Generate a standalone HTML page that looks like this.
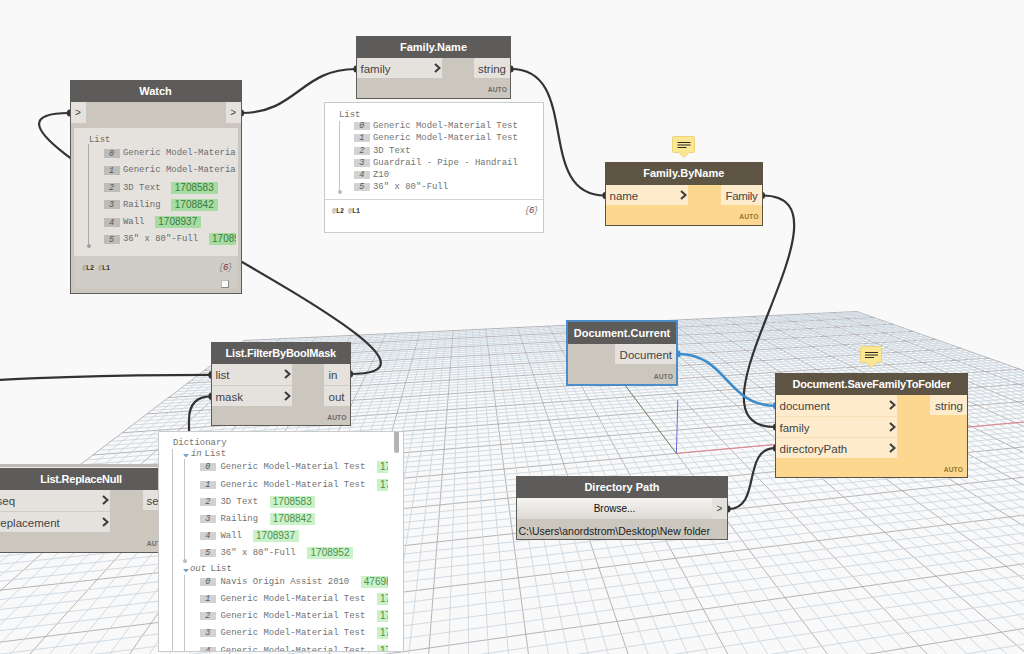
<!DOCTYPE html>
<html><head><meta charset="utf-8"><title>Dynamo</title>
<style>
*{box-sizing:border-box;margin:0;padding:0}
html,body{width:1024px;height:654px;overflow:hidden;background:#f9f9f9;font-family:"Liberation Sans",sans-serif}
.L{position:absolute;left:0;top:0}
.node{position:absolute;background:#cbc6be;border:1px solid #5e5c5a;border-top:none}
.hd{position:absolute;left:-1px;right:-1px;top:0;height:22px;background:#5e5c5a;color:#fff;font-weight:bold;font-size:11px;line-height:22px;text-align:center;white-space:nowrap}
.pt{position:absolute;background:#e5e2de;color:#444;font-size:11.5px;line-height:22px;height:20px;white-space:nowrap;overflow:hidden}
.pi{padding-left:3.5px}
.po{text-align:right;padding-right:4px}
.ch{position:absolute;right:1px;top:5px;width:7px;height:10px}
.auto{position:absolute;font-size:6.7px;font-weight:bold;color:#6e6a66;letter-spacing:.1px;margin-top:1px}
.warn{background:#fbd78f;border-color:#5d5444}
.warn .hd{background:#5d5444}
.warn .pt{background:#fdebcb}
.warn .auto{color:#96762f}
.mono{font-family:"Liberation Mono",monospace;font-size:8.95px;color:#6b6b6b;white-space:pre;position:absolute;line-height:12px;height:12px}
.ix{position:absolute;width:16px;height:9px;background:#bebcb9;color:#555;font-family:"Liberation Mono",monospace;font-style:italic;font-size:8.5px;line-height:10.5px;text-align:center}
.tag{position:absolute;height:12px;background:#a6dca2;color:#3d7a3d;font-size:10px;line-height:12px;text-align:center;white-space:nowrap;overflow:hidden}
.bub{position:absolute;background:#fff;border:1px solid #cbcbcb;overflow:hidden}
.bub .mono{color:#727272}
.bub .ix{width:16.5px;background:#d2d2d2;height:8px;line-height:9.5px}
.bub .tag{background:#caf2c8;color:#4f8f4f}
.vl{position:absolute;width:1px;background:#a9a9a9}
.dot{position:absolute;width:4px;height:4px;border-radius:2px;background:#a0a0a0}
.lv{position:absolute;font-family:"Liberation Mono",monospace;font-weight:bold;font-size:6.7px;color:#333;white-space:pre;line-height:8px}
.lv i{font-style:normal;color:#999;font-weight:normal}
.cnt{position:absolute;letter-spacing:-1px;font-family:"Liberation Mono",monospace;font-style:italic;font-size:9px;color:#7a2a2a;line-height:10px;white-space:pre}
.cnt b{font-weight:normal;color:#888}
.note{position:absolute}
</style></head><body>
<svg class="L" width="1024" height="654" viewBox="0 0 1024 654">
<path d="M243.8 340.5L-30.0 548.2M243.8 340.5L856.9 311.5M280.4 338.8L-30.0 618.1M231.9 349.5L874.0 317.5M316.4 337.1L2.7 684.0M218.8 359.5L892.7 324.2M351.6 335.4L108.7 684.0M204.1 370.6L913.2 331.4M386.1 333.8L214.6 684.0M187.5 383.2L935.8 339.4M419.9 332.2L320.5 684.0M168.6 397.5L960.8 348.3M453.1 330.6L426.4 684.0M147.0 413.9L988.6 358.1M485.6 329.1L532.4 684.0M122.1 432.8L1019.6 369.1M517.4 327.6L638.3 684.0M92.8 455.0L1054.0 381.5M548.7 326.1L744.2 684.0M58.1 481.3L1054.0 398.9M579.4 324.6L850.1 684.0M16.3 513.1L1054.0 419.3M609.5 323.2L956.0 684.0M-30.0 551.6L1054.0 443.9M639.0 321.8L1054.0 677.2M-30.0 593.5L1054.0 473.9M668.0 320.4L1054.0 601.2M-30.0 645.8L1054.0 511.4M696.5 319.1L1054.0 545.1M174.9 684.0L1054.0 559.5M724.4 317.8L1054.0 502.0M687.7 684.0L1054.0 623.5M751.8 316.5L1054.0 467.8M778.8 315.2L1054.0 440.1M805.3 313.9L1054.0 417.1M831.3 312.7L1054.0 397.8M856.9 311.5L1054.0 381.3" stroke="#a6a8ac" stroke-width="0.85" fill="none"/>
<path d="M251.2 340.2L-30.0 560.3M241.5 342.2L860.2 312.6M258.5 339.8L-30.0 573.3M239.2 344.0L863.6 313.8M265.9 339.5L-30.0 587.2M236.8 345.8L867.0 315.1M273.2 339.1L-30.0 602.1M234.4 347.6L870.5 316.3M287.7 338.4L-30.0 635.4M229.4 351.4L877.6 318.8M294.9 338.1L-30.0 654.0M226.9 353.3L881.3 320.1M302.1 337.8L-30.0 674.2M224.2 355.3L885.0 321.4M309.3 337.4L-18.4 684.0M221.5 357.4L888.9 322.8M323.5 336.7L23.9 684.0M216.0 361.6L896.7 325.6M330.6 336.4L45.1 684.0M213.1 363.8L900.7 327.0M337.6 336.1L66.3 684.0M210.2 366.0L904.8 328.4M344.6 335.7L87.5 684.0M207.2 368.3L909.0 329.9M358.6 335.1L129.9 684.0M200.9 373.0L917.6 333.0M365.5 334.8L151.0 684.0M197.7 375.5L922.0 334.5M372.4 334.4L172.2 684.0M194.4 378.0L926.5 336.1M379.3 334.1L193.4 684.0M191.0 380.6L931.1 337.8M392.9 333.5L235.8 684.0M183.9 385.9L940.6 341.1M399.7 333.1L257.0 684.0M180.2 388.7L945.5 342.9M406.5 332.8L278.1 684.0M176.5 391.6L950.5 344.6M413.2 332.5L299.3 684.0M172.6 394.5L955.6 346.4M426.6 331.9L341.7 684.0M164.6 400.6L966.1 350.1M433.3 331.5L362.9 684.0M160.4 403.8L971.5 352.1M439.9 331.2L384.1 684.0M156.0 407.0L977.1 354.0M446.5 330.9L405.3 684.0M151.6 410.4L982.8 356.0M459.6 330.3L447.6 684.0M142.3 417.4L994.5 360.2M466.1 330.0L468.8 684.0M137.5 421.1L1000.6 362.3M472.6 329.7L490.0 684.0M132.5 424.9L1006.8 364.5M479.1 329.4L511.2 684.0M127.4 428.8L1013.1 366.8M492.0 328.8L553.5 684.0M116.6 437.0L1026.3 371.4M498.4 328.5L574.7 684.0M110.9 441.3L1033.1 373.9M504.8 328.2L595.9 684.0M105.1 445.7L1040.1 376.3M511.1 327.9L617.1 684.0M99.1 450.3L1047.3 378.9M523.7 327.3L659.5 684.0M86.4 459.9L1054.0 384.8M530.0 327.0L680.6 684.0M79.7 465.0L1054.0 388.1M536.3 326.7L701.8 684.0M72.7 470.2L1054.0 391.6M542.5 326.4L723.0 684.0M65.6 475.7L1054.0 395.2M554.9 325.8L765.4 684.0M50.4 487.2L1054.0 402.7M561.0 325.5L786.6 684.0M42.3 493.3L1054.0 406.6M567.2 325.2L807.8 684.0M34.0 499.6L1054.0 410.7M573.3 324.9L828.9 684.0M25.3 506.2L1054.0 415.0M585.4 324.3L871.3 684.0M6.8 520.2L1054.0 423.9M591.5 324.0L892.5 684.0M-3.0 527.7L1054.0 428.6M597.5 323.8L913.7 684.0M-13.2 535.4L1054.0 433.5M603.5 323.5L934.9 684.0M-24.0 543.6L1054.0 438.6M615.4 322.9L977.2 684.0M-30.0 559.3L1054.0 449.4M621.3 322.6L998.4 684.0M-30.0 567.3L1054.0 455.2M627.3 322.4L1019.6 684.0M-30.0 575.6L1054.0 461.1M633.1 322.1L1040.8 684.0M-30.0 584.4L1054.0 467.4M644.8 321.5L1054.0 659.9M-30.0 603.0L1054.0 480.7M650.7 321.2L1054.0 643.8M-30.0 613.0L1054.0 487.9M656.5 321.0L1054.0 628.7M-30.0 623.4L1054.0 495.3M662.2 320.7L1054.0 614.5M-30.0 634.3L1054.0 503.2M673.7 320.2L1054.0 588.6M-30.0 657.9L1054.0 520.0M679.4 319.9L1054.0 576.8M-30.0 670.6L1054.0 529.1M685.1 319.6L1054.0 565.7M-30.0 684.0L1054.0 538.7M690.8 319.3L1054.0 555.1M72.3 684.0L1054.0 548.8M702.1 318.8L1054.0 535.6M277.5 684.0L1054.0 570.8M707.7 318.5L1054.0 526.5M380.0 684.0L1054.0 582.8M713.3 318.3L1054.0 518.0M482.6 684.0L1054.0 595.5M718.9 318.0L1054.0 509.8M585.2 684.0L1054.0 609.1M729.9 317.5L1054.0 494.5M790.3 684.0L1054.0 639.0M735.4 317.2L1054.0 487.4M892.8 684.0L1054.0 655.5M740.9 317.0L1054.0 480.6M995.4 684.0L1054.0 673.3M746.4 316.7L1054.0 474.1M757.3 316.2L1054.0 461.8M762.7 315.9L1054.0 456.0M768.1 315.7L1054.0 450.5M773.5 315.4L1054.0 445.2M784.1 314.9L1054.0 435.1M789.5 314.7L1054.0 430.4M794.7 314.4L1054.0 425.8M800.0 314.2L1054.0 421.4M810.5 313.7L1054.0 413.0M815.7 313.4L1054.0 409.0M821.0 313.2L1054.0 405.1M826.1 312.9L1054.0 401.4M836.5 312.4L1054.0 394.2M841.6 312.2L1054.0 390.9M846.7 312.0L1054.0 387.6M851.8 311.7L1054.0 384.4" stroke="#ccd7e0" stroke-width="0.9" fill="none"/>
<path d="M676.4 453.4L1054.0 419.3" stroke="#e3838d" stroke-width="1" fill="none"/>
<path d="M676.4 453.4L579.4 324.6" stroke="#5d8a5d" stroke-width="0.9" fill="none"/>
<path d="M676.4 453.4L677.8 399.8" stroke="#7468d0" stroke-width="1" fill="none"/>
</svg>
<svg class="L" width="1024" height="654" viewBox="0 0 1024 654"><path d="M350.5 374.0C523.1 374.0 -103.1 113.0 69.5 113.0" stroke="#333" stroke-width="2.2" fill="none"/><path d="M241.5 113.0C296.7 113.0 300.8 69.0 356.0 69.0" stroke="#333" stroke-width="2.2" fill="none"/><path d="M511.0 69.0C581.9 69.0 534.1 195.5 605.0 195.5" stroke="#333" stroke-width="2.2" fill="none"/><path d="M762.5 195.5C866.8 195.5 671.2 427.0 775.5 427.0" stroke="#333" stroke-width="2.2" fill="none"/><path d="M678.0 354.0C727.7 354.0 725.8 405.8 775.5 405.8" stroke="#3c8ccb" stroke-width="2.6" fill="none"/><path d="M728.0 509.0C762.7 509.0 740.8 448.2 775.5 448.2" stroke="#333" stroke-width="2.2" fill="none"/><path d="M-300.0 389.0C-70.0 389.0 -19.0 374.9 211.0 374.9" stroke="#333" stroke-width="2.2" fill="none"/><path d="M211 396.3C198 396.3 189 402 189 420L189 440" stroke="#333" stroke-width="2.2" fill="none"/><ellipse cx="69.5" cy="113" rx="2.6" ry="3.6" fill="#333"/><ellipse cx="241.5" cy="113" rx="2.6" ry="3.6" fill="#333"/><ellipse cx="356" cy="69" rx="2.6" ry="3.6" fill="#333"/><ellipse cx="511" cy="69" rx="2.6" ry="3.6" fill="#333"/><ellipse cx="605" cy="195.5" rx="2.6" ry="3.6" fill="#333"/><ellipse cx="762.5" cy="195.5" rx="2.6" ry="3.6" fill="#333"/><ellipse cx="775.5" cy="427" rx="2.6" ry="3.6" fill="#333"/><ellipse cx="775.5" cy="405.8" rx="2.6" ry="3.6" fill="#3c8ccb"/><ellipse cx="678" cy="354" rx="2.6" ry="3.6" fill="#3c8ccb"/><ellipse cx="728" cy="509" rx="2.6" ry="3.6" fill="#333"/><ellipse cx="775.5" cy="448.2" rx="2.6" ry="3.6" fill="#333"/><ellipse cx="211" cy="374.9" rx="2.6" ry="3.6" fill="#333"/><ellipse cx="211" cy="396.3" rx="2.6" ry="3.6" fill="#333"/><ellipse cx="350.5" cy="374" rx="2.6" ry="3.6" fill="#333"/></svg>

<!-- Watch -->
<div class="node" style="left:69.5px;top:80px;width:172px;height:214px">
 <div class="hd">Watch</div>
 <div class="pt" style="left:0;top:22px;width:15px;height:20.6px;text-align:center;font-size:10px">&gt;</div>
 <div class="pt" style="right:0;top:22px;width:14.5px;height:20.6px;text-align:center;font-size:10px">&gt;</div>
 <div style="position:absolute;left:3.5px;top:48px;width:164px;height:128px;background:#e5e2de"><div style="position:absolute;left:0;top:0;width:162px;height:128px;overflow:hidden">
  <div class="mono" style="left:15px;top:6px">List</div>
  <div class="vl" style="left:14px;top:16px;height:102px"></div><div class="dot" style="left:12.5px;top:116px"></div>
  <div class="ix" style="left:29.5px;top:20.5px">0</div>
  <div class="mono" style="left:49px;top:19.0px">Generic Model-Material Test</div>
  <div class="tag" style="left:195px;top:19.0px;width:46px">1708583</div>
  <div class="ix" style="left:29.5px;top:37.7px">1</div>
  <div class="mono" style="left:49px;top:36.2px">Generic Model-Material Test</div>
  <div class="tag" style="left:195px;top:36.2px;width:46px">1708583</div>
  <div class="ix" style="left:29.5px;top:55.0px">2</div>
  <div class="mono" style="left:49px;top:53.5px">3D Text</div>
  <div class="tag" style="left:97px;top:53.5px;width:46.5px">1708583</div>
  <div class="ix" style="left:29.5px;top:72.2px">3</div>
  <div class="mono" style="left:49px;top:70.7px">Railing</div>
  <div class="tag" style="left:97px;top:70.7px;width:46.5px">1708842</div>
  <div class="ix" style="left:29.5px;top:89.5px">4</div>
  <div class="mono" style="left:49px;top:88.0px">Wall</div>
  <div class="tag" style="left:81px;top:88.0px;width:45.5px">1708937</div>
  <div class="ix" style="left:29.5px;top:106.7px">5</div>
  <div class="mono" style="left:49px;top:105.2px">36" x 80"-Full</div>
  <div class="tag" style="left:134.5px;top:105.2px;width:46px">1708952</div>
 </div></div>
 <div style="position:absolute;left:3.5px;top:176px;width:164px;height:33px;background:#d0cdc7">
  <div class="lv" style="left:8px;top:8px"><i>@</i>L2 <i>@</i>L1</div>
  <div class="cnt" style="left:144.5px;top:7px"><b>{</b>6<b>}</b></div>
  <div style="position:absolute;left:147px;top:24px;width:8px;height:8px;background:#fafafa;border:1px solid #bbb;border-right-color:#888;border-bottom-color:#888"></div>
 </div>
</div>

<!-- Family.Name -->
<div class="node" style="left:356px;top:36px;width:155px;height:63px">
 <div class="hd">Family.Name</div>
 <div class="pt pi" style="left:0;top:22px;width:85px">family<svg class="ch" viewBox="0 0 7 10"><path d="M1 1L5.5 5L1 9" stroke="#3a3a3a" stroke-width="2" fill="none"/></svg></div>
 <div class="pt po" style="right:0;top:22px;width:36px">string</div>
 <div class="auto" style="right:3px;top:49px">AUTO</div>
</div>
<div class="bub" style="left:324px;top:102px;width:220px;height:131px">
 <div class="mono" style="left:14px;top:6px">List</div>
 <div class="vl" style="left:14px;top:18px;height:71px;background:#c4c4c4"></div><div class="dot" style="left:12.5px;top:87px;background:#bbb"></div>
 <div class="ix" style="left:28.5px;top:19.0px">0</div>
  <div class="mono" style="left:48px;top:17.0px">Generic Model-Material Test</div>
  <div class="ix" style="left:28.5px;top:31.3px">1</div>
  <div class="mono" style="left:48px;top:29.3px">Generic Model-Material Test</div>
  <div class="ix" style="left:28.5px;top:43.6px">2</div>
  <div class="mono" style="left:48px;top:41.6px">3D Text</div>
  <div class="ix" style="left:28.5px;top:55.8px">3</div>
  <div class="mono" style="left:48px;top:53.8px">Guardrail - Pipe - Handrail</div>
  <div class="ix" style="left:28.5px;top:68.1px">4</div>
  <div class="mono" style="left:48px;top:66.1px">Z10</div>
  <div class="ix" style="left:28.5px;top:80.4px">5</div>
  <div class="mono" style="left:48px;top:78.4px">36" x 80"-Full</div>
 <div style="position:absolute;left:0;right:0;top:96px;height:1px;background:#d4d4d4"></div>
 <div class="lv" style="left:7px;top:104px"><i>@</i>L2 <i>@</i>L1</div>
 <div class="cnt" style="left:199.5px;top:103px"><b>{</b>6<b>}</b></div>
</div>

<!-- Family.ByName -->
<svg class="note" style="left:672px;top:136px" width="24" height="23" viewBox="0 0 24 23"><path d="M1.5 .5H21.5Q22.5 .5 22.5 1.5V15.5Q22.5 16.5 21.5 16.5H17L12 21.5L7 16.5H1.5Q.5 16.5 .5 15.5V1.5Q.5 .5 1.5 .5Z" fill="#fbe691" stroke="#ead47c"/><path d="M5.5 6.5H18.5M5.5 9H18.5M5.5 11.5H14.5" stroke="#2a2a2a" stroke-width="1.2"/></svg>
<div class="node warn" style="left:605px;top:162px;width:157.5px;height:63.5px">
 <div class="hd" style="height:22.5px">Family.ByName</div>
 <div class="pt pi" style="left:0;top:22.5px;width:82px;height:20.5px">name<svg class="ch" viewBox="0 0 7 10"><path d="M1 1L5.5 5L1 9" stroke="#3a3a3a" stroke-width="2" fill="none"/></svg></div>
 <div class="pt po" style="right:0;top:22.5px;width:40.5px;height:20.5px;letter-spacing:-.3px">Family</div>
 <div class="auto" style="right:3px;top:50px">AUTO</div>
</div>

<!-- Document.Current -->
<div class="node" style="left:566px;top:320px;width:112px;height:66px;border:2px solid #4b8dc9">
 <div class="hd" style="left:0;right:0;top:0">Document.Current</div>
 <div class="pt po" style="right:0;top:22px;width:61px">Document</div>
 <div class="auto" style="right:3px;top:50px">AUTO</div>
</div>

<!-- Document.SaveFamilyToFolder -->
<svg class="note" style="left:860px;top:346px" width="24" height="23" viewBox="0 0 24 23"><path d="M1.5 .5H20.5Q21.5 .5 21.5 1.5V15.5Q21.5 16.5 20.5 16.5H16.5L11.5 21.5L6.5 16.5H1.5Q.5 16.5 .5 15.5V1.5Q.5 .5 1.5 .5Z" fill="#fbe691" stroke="#ead47c"/><path d="M5 6.5H18M5 9H18M5 11.5H14" stroke="#2a2a2a" stroke-width="1.2"/></svg>
<div class="node warn" style="left:775px;top:373px;width:193px;height:105px">
 <div class="hd" style="letter-spacing:-.2px">Document.SaveFamilyToFolder</div>
 <div class="pt pi" style="left:0;top:22px;width:121px;height:21px;line-height:22px">document<svg class="ch" viewBox="0 0 7 10"><path d="M1 1L5.5 5L1 9" stroke="#3a3a3a" stroke-width="2" fill="none"/></svg></div>
 <div class="pt pi" style="left:0;top:43px;width:121px;height:21px;line-height:22px;border-top:1px solid #f7dfb3">family<svg class="ch" viewBox="0 0 7 10"><path d="M1 1L5.5 5L1 9" stroke="#3a3a3a" stroke-width="2" fill="none"/></svg></div>
 <div class="pt pi" style="left:0;top:64px;width:121px;height:21px;line-height:22px;border-top:1px solid #f7dfb3">directoryPath<svg class="ch" viewBox="0 0 7 10"><path d="M1 1L5.5 5L1 9" stroke="#3a3a3a" stroke-width="2" fill="none"/></svg></div>
 <div class="pt po" style="right:0;top:22px;width:37px">string</div>
 <div class="auto" style="right:4px;top:92px">AUTO</div>
</div>

<!-- Directory Path -->
<div class="node" style="left:516px;top:476px;width:212px;height:64px">
 <div class="hd">Directory Path</div>
 <div style="position:absolute;left:0;top:22px;width:195px;height:21px;background:linear-gradient(#f6f4f1,#dcd9d4);color:#111;font-size:10px;line-height:21px;text-align:center">Browse...</div>
 <div class="pt" style="right:0;top:22px;width:15px;height:21px;line-height:22px;text-align:center;font-size:10px">&gt;</div>
 <div style="position:absolute;left:1.5px;top:46.5px;font-size:10.5px;color:#222;line-height:16px;white-space:nowrap">C:\Users\anordstrom\Desktop\New folder</div>
</div>

<!-- List.ReplaceNull -->
<div style="position:absolute;left:-8px;top:463.8px;width:178px;height:4.4px;background:#ecebe9;border-top:3px solid #bcbab6"></div>
<div class="node" style="left:-8px;top:468px;width:178px;height:85px">
 <div class="hd" style="letter-spacing:-.25px">List.ReplaceNull</div>
 <div class="pt pi" style="left:0;top:22px;width:117px;height:21px;line-height:22px">seq<svg class="ch" viewBox="0 0 7 10"><path d="M1 1L5.5 5L1 9" stroke="#3a3a3a" stroke-width="2" fill="none"/></svg></div>
 <div class="pt pi" style="left:0;top:43px;width:117px;height:21px;line-height:22px;border-top:1px solid #d0ccc6">replacement<svg class="ch" viewBox="0 0 7 10"><path d="M1 1L5.5 5L1 9" stroke="#3a3a3a" stroke-width="2" fill="none"/></svg></div>
 <div class="pt po" style="right:0;top:22px;width:26px">seq</div>
 <div class="auto" style="right:3px;top:71px">AUTO</div>
</div>

<!-- List.FilterByBoolMask -->
<div class="node" style="left:211px;top:341.5px;width:139.5px;height:84.5px">
 <div class="hd" style="letter-spacing:-.25px">List.FilterByBoolMask</div>
 <div class="pt pi" style="left:0;top:22px;width:80px;height:21px;line-height:22px">list<svg class="ch" viewBox="0 0 7 10"><path d="M1 1L5.5 5L1 9" stroke="#3a3a3a" stroke-width="2" fill="none"/></svg></div>
 <div class="pt pi" style="left:0;top:43px;width:80px;height:21px;line-height:22px;border-top:1px solid #d0ccc6">mask<svg class="ch" viewBox="0 0 7 10"><path d="M1 1L5.5 5L1 9" stroke="#3a3a3a" stroke-width="2" fill="none"/></svg></div>
 <div class="pt" style="right:0;top:22px;width:26px;height:21px;line-height:22px;padding-left:5px">in</div>
 <div class="pt" style="right:0;top:43px;width:26px;height:21px;line-height:22px;padding-left:5px;border-top:1px solid #d0ccc6">out</div>
 <div class="auto" style="right:3px;top:71px">AUTO</div>
</div>
<div class="bub" style="left:158px;top:431px;width:246px;height:221px">
 <div style="position:absolute;left:0;top:0;width:228.5px;height:221px;overflow:hidden">
 <div class="mono" style="left:14px;top:5px">Dictionary</div>
 <div class="vl" style="left:13px;top:17px;height:210px;background:#c4c4c4"></div>
 <div class="vl" style="left:25px;top:27px;height:102px;background:#c4c4c4"></div><div class="dot" style="left:23.5px;top:127px;background:#bbb"></div>
 <div class="vl" style="left:25px;top:143px;height:90px;background:#c4c4c4"></div>
 <svg style="position:absolute;left:23.7px;top:22.3px" width="6" height="4" viewBox="0 0 6 4"><path d="M0 0H6L3 3.6Z" fill="#78a3c8"/></svg>
  <div class="mono" style="left:32px;top:16px"><i>in</i></div><div class="mono" style="left:45.6px;top:16px">List</div>
  <svg style="position:absolute;left:23.7px;top:137.3px" width="6" height="4" viewBox="0 0 6 4"><path d="M0 0H6L3 3.6Z" fill="#78a3c8"/></svg>
  <div class="mono" style="left:31px;top:131px"><i>out</i></div><div class="mono" style="left:51.4px;top:131px">List</div>
  <div class="ix" style="left:40.5px;top:31.3px">0</div>
  <div class="mono" style="left:61.5px;top:29.3px">Generic Model-Material Test</div>
  <div class="tag" style="left:217.5px;top:29.3px;width:46px">1708583</div>
  <div class="ix" style="left:40.5px;top:48.5px">1</div>
  <div class="mono" style="left:61.5px;top:46.5px">Generic Model-Material Test</div>
  <div class="tag" style="left:217.5px;top:46.5px;width:46px">1708583</div>
  <div class="ix" style="left:40.5px;top:65.7px">2</div>
  <div class="mono" style="left:61.5px;top:63.7px">3D Text</div>
  <div class="tag" style="left:110.5px;top:63.7px;width:45.5px">1708583</div>
  <div class="ix" style="left:40.5px;top:82.9px">3</div>
  <div class="mono" style="left:61.5px;top:80.9px">Railing</div>
  <div class="tag" style="left:110.5px;top:80.9px;width:45.5px">1708842</div>
  <div class="ix" style="left:40.5px;top:100.1px">4</div>
  <div class="mono" style="left:61.5px;top:98.1px">Wall</div>
  <div class="tag" style="left:93.5px;top:98.1px;width:46px">1708937</div>
  <div class="ix" style="left:40.5px;top:117.3px">5</div>
  <div class="mono" style="left:61.5px;top:115.3px">36" x 80"-Full</div>
  <div class="tag" style="left:148px;top:115.3px;width:46px">1708952</div>
  <div class="ix" style="left:40.5px;top:145.7px">0</div>
  <div class="mono" style="left:61.5px;top:143.7px">Navis Origin Assist 2010</div>
  <div class="tag" style="left:201.5px;top:143.7px;width:40px">476983</div>
  <div class="ix" style="left:40.5px;top:162.9px">1</div>
  <div class="mono" style="left:61.5px;top:160.9px">Generic Model-Material Test</div>
  <div class="tag" style="left:217.5px;top:160.9px;width:46px">1708583</div>
  <div class="ix" style="left:40.5px;top:180.1px">2</div>
  <div class="mono" style="left:61.5px;top:178.1px">Generic Model-Material Test</div>
  <div class="tag" style="left:217.5px;top:178.1px;width:46px">1708583</div>
  <div class="ix" style="left:40.5px;top:197.3px">3</div>
  <div class="mono" style="left:61.5px;top:195.3px">Generic Model-Material Test</div>
  <div class="tag" style="left:217.5px;top:195.3px;width:46px">1708583</div>
  <div class="ix" style="left:40.5px;top:214.5px">4</div>
  <div class="mono" style="left:61.5px;top:212.5px">Generic Model-Material Test</div>
  <div class="tag" style="left:217.5px;top:212.5px;width:46px">1708583</div>
 </div>
 <div style="position:absolute;left:234.5px;top:-2px;width:5.5px;height:23px;border-radius:3px;background:#b4b4b4"></div>
</div>
</body></html>
